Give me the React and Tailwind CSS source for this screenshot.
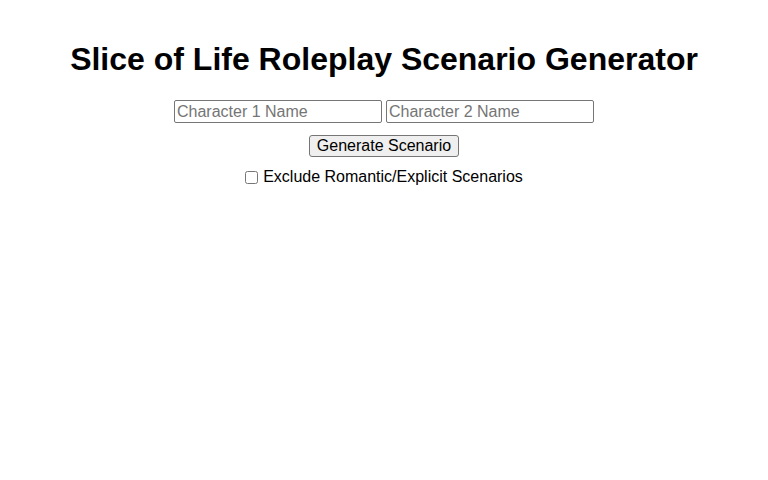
import React, { useState } from 'react';

const App = () => {
  const [name1, setName1] = useState('');
  const [name2, setName2] = useState('');
  const [safeMode, setSafeMode] = useState(false);

  return (
    <div className="min-h-screen bg-white text-black font-['Liberation_Sans',Arial,sans-serif] flex flex-col items-center">
      <h1 className="mt-[41px] text-[32px] leading-[37px] font-bold text-center">
        Slice of Life Roleplay Scenario Generator
      </h1>

      {/* name inputs */}
      <div className="mt-[22px] flex gap-1">
        <input
          type="text"
          value={name1}
          onChange={(e) => setName1(e.target.value)}
          placeholder="Character 1 Name"
          className="w-[208px] h-[23px] px-[2px] py-px border border-[#767676] rounded-[2px] text-[16px] leading-[19px] placeholder:text-[#757575] outline-none"
        />
        <input
          type="text"
          value={name2}
          onChange={(e) => setName2(e.target.value)}
          placeholder="Character 2 Name"
          className="w-[208px] h-[23px] px-[2px] py-px border border-[#767676] rounded-[2px] text-[16px] leading-[19px] placeholder:text-[#757575] outline-none"
        />
      </div>

      <button className="mt-[12px] h-[22px] px-[7px] border border-[#767676] rounded-[3px] bg-[#efefef] text-[16px] leading-[18px]">
        Generate Scenario
      </button>

      <label className="mt-[10px] flex items-center text-[16px] leading-[20px]">
        <input
          type="checkbox"
          checked={safeMode}
          onChange={(e) => setSafeMode(e.target.checked)}
          className="w-[13px] h-[13px] mr-[5px]"
        />
        Exclude Romantic/Explicit Scenarios
      </label>
    </div>
  );
};

export default App;
